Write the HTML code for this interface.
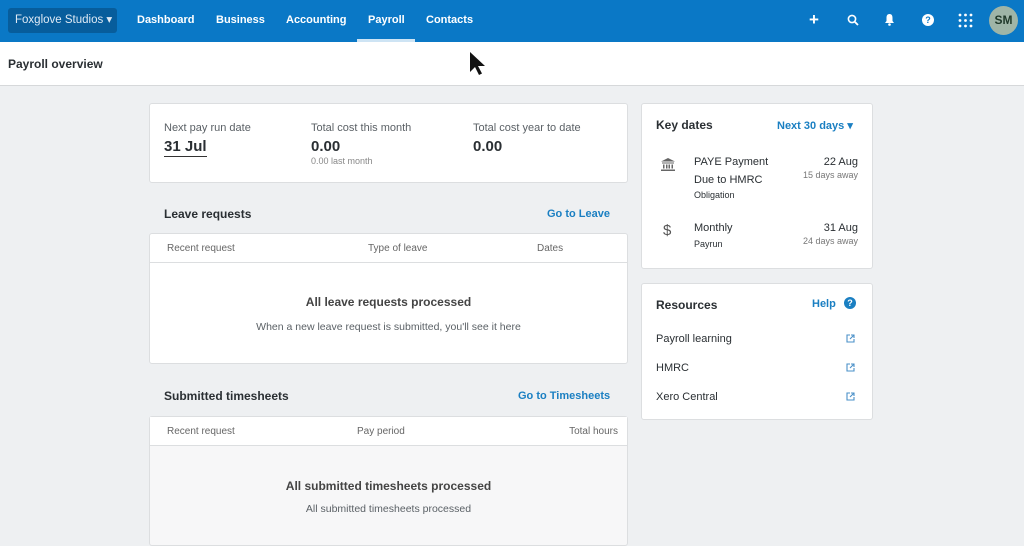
<!DOCTYPE html>
<html><head><meta charset="utf-8"><style>
*{box-sizing:border-box;margin:0;padding:0}
body{width:1024px;height:538px;overflow:hidden;font-family:"Liberation Sans",sans-serif;background:#eef0f2;position:relative;color:#2a2f33}
.nav{position:absolute;left:0;top:0;width:1024px;height:42px;background:#0a78c6}
.org{position:absolute;left:8px;top:8px;width:109px;height:25px;background:#075d9c;border-radius:3px;color:#dfeaf5;font-size:11.5px;line-height:25px;padding-left:7px}
.nl{position:absolute;top:14px;color:#fff;font-weight:bold;font-size:11px}
.ul{position:absolute;left:357px;top:39px;width:58px;height:3px;background:#fff;opacity:.8}
.hdr{position:absolute;left:0;top:42px;width:1024px;height:44px;background:#fff;border-bottom:1px solid #d6d8da}
.hdr b{position:absolute;left:8px;top:15px;font-size:12px}
.card{position:absolute;background:#fff;border:1px solid #dcdee0;border-radius:3px}
.abs{position:absolute;white-space:nowrap}
.g{color:#5b6166}
.lnk{color:#1a7fc2;font-weight:bold;font-size:11px}
.th{position:absolute;left:0;top:0;width:100%;height:29px;border-bottom:1px solid #dcdee0;font-size:10px;color:#666}
</style></head><body>
<div class="nav">
<div class="org">Foxglove Studios ▾</div>
<span class="nl" style="left:137px">Dashboard</span>
<span class="nl" style="left:216px">Business</span>
<span class="nl" style="left:286px">Accounting</span>
<span class="nl" style="left:368px">Payroll</span>
<span class="nl" style="left:426px">Contacts</span>
<div class="ul"></div>
<span class="abs" style="left:809px;top:10px;color:#fff;font-size:17px;font-weight:bold">+</span>
<svg class="abs" style="left:847px;top:14px" width="12" height="12" viewBox="0 0 12 12"><circle cx="5" cy="5" r="3.6" stroke="#fff" stroke-width="1.6" fill="none"/><path d="M7.6 7.6L11 11" stroke="#fff" stroke-width="1.8"/></svg>
<svg class="abs" style="left:884px;top:13px" width="11" height="13" viewBox="0 0 11 13"><path d="M5.5 1C3 1 2.5 3 2.5 5v3L1 10h9L8.5 8V5C8.5 3 8 1 5.5 1z" fill="#fff"/><circle cx="5.5" cy="11.5" r="1.3" fill="#fff"/></svg>
<div class="abs" style="left:922px;top:14px;width:12px;height:12px;border-radius:50%;background:#fff;color:#0a78c6;font-size:9px;font-weight:bold;text-align:center;line-height:12px">?</div>
<svg class="abs" style="left:958px;top:13px" width="15" height="15"><g fill="#fff"><circle cx="2" cy="2" r="1.4"/><circle cx="7.5" cy="2" r="1.4"/><circle cx="13" cy="2" r="1.4"/><circle cx="2" cy="7.5" r="1.4"/><circle cx="7.5" cy="7.5" r="1.4"/><circle cx="13" cy="7.5" r="1.4"/><circle cx="2" cy="13" r="1.4"/><circle cx="7.5" cy="13" r="1.4"/><circle cx="13" cy="13" r="1.4"/></g></svg>
<div class="abs" style="left:989px;top:6px;width:29px;height:29px;border-radius:50%;background:#9fb5a7;color:#213a2b;font-size:12px;font-weight:bold;text-align:center;line-height:29px">SM</div>
</div>
<div class="hdr"><b>Payroll overview</b></div>
<svg class="abs" style="left:469px;top:51px" width="18" height="26" viewBox="0 0 18 26"><path d="M1 1v20l5-5 4 8 3-1.5-4-7.5h7z" fill="#111"/></svg>

<div class="card" style="left:149px;top:103px;width:479px;height:80px">
<span class="abs g" style="left:14px;top:18px;font-size:11px">Next pay run date</span>
<span class="abs" style="left:14px;top:34px;font-size:15px;font-weight:bold;border-bottom:1px solid #333;padding-bottom:1px">31 Jul</span>
<span class="abs g" style="left:161px;top:18px;font-size:11px">Total cost this month</span>
<span class="abs" style="left:161px;top:34px;font-size:15px;font-weight:bold">0.00</span>
<span class="abs g" style="left:161px;top:52px;font-size:9px;color:#888">0.00 last month</span>
<span class="abs g" style="left:323px;top:18px;font-size:11px">Total cost year to date</span>
<span class="abs" style="left:323px;top:34px;font-size:15px;font-weight:bold">0.00</span>
</div>

<span class="abs" style="left:164px;top:207px;font-size:12px;font-weight:bold">Leave requests</span>
<span class="abs lnk" style="left:547px;top:208px">Go to Leave</span>
<div class="card" style="left:149px;top:233px;width:479px;height:131px">
<div class="th"><span class="abs" style="left:17px;top:9px">Recent request</span><span class="abs" style="left:218px;top:9px">Type of leave</span><span class="abs" style="left:387px;top:9px">Dates</span></div>
<div class="abs" style="left:0;width:477px;top:61px;text-align:center;font-size:12px;font-weight:bold;color:#444">All leave requests processed</div>
<div class="abs g" style="left:0;width:477px;top:87px;text-align:center;font-size:10.5px">When a new leave request is submitted, you'll see it here</div>
</div>

<span class="abs" style="left:164px;top:389px;font-size:12px;font-weight:bold">Submitted timesheets</span>
<span class="abs lnk" style="left:518px;top:390px">Go to Timesheets</span>
<div class="card" style="left:149px;top:416px;width:479px;height:130px;background:#f7f7f8">
<div class="th" style="background:#fff"><span class="abs" style="left:17px;top:9px">Recent request</span><span class="abs" style="left:207px;top:9px">Pay period</span><span class="abs" style="right:9px;top:9px">Total hours</span></div>
<div class="abs" style="left:0;width:477px;top:62px;text-align:center;font-size:12px;font-weight:bold;color:#444">All submitted timesheets processed</div>
<div class="abs g" style="left:0;width:477px;top:86px;text-align:center;font-size:10.5px">All submitted timesheets processed</div>
</div>

<div class="card" style="left:641px;top:103px;width:232px;height:166px">
<span class="abs" style="left:14px;top:14px;font-size:12px;font-weight:bold">Key dates</span>
<span class="abs lnk" style="left:135px;top:15px">Next 30 days ▾</span>
<svg class="abs" style="left:19px;top:54px" width="14" height="13" viewBox="0 0 14 13"><path d="M7 0L0 3.5h14z M1 4.5h12v1H1z M2 6.5h1.5v4H2z M5 6.5h1.5v4H5z M7.5 6.5H9v4H7.5z M10.5 6.5H12v4h-1.5z M0 11.5h14V13H0z" fill="#666"/></svg>
<span class="abs" style="left:52px;top:52px;font-size:11px">PAYE Payment</span>
<span class="abs" style="left:52px;top:70px;font-size:11px">Due to HMRC</span>
<span class="abs" style="left:52px;top:86px;font-size:9px">Obligation</span>
<span class="abs" style="right:14px;top:52px;font-size:11px">22 Aug</span>
<span class="abs" style="right:14px;top:66px;font-size:9px;color:#777">15 days away</span>
<span class="abs" style="left:21px;top:118px;font-size:15px;color:#555">$</span>
<span class="abs" style="left:52px;top:118px;font-size:11px">Monthly</span>
<span class="abs" style="left:52px;top:135px;font-size:9px">Payrun</span>
<span class="abs" style="right:14px;top:118px;font-size:11px">31 Aug</span>
<span class="abs" style="right:14px;top:132px;font-size:9px;color:#777">24 days away</span>
</div>

<div class="card" style="left:641px;top:283px;width:232px;height:137px">
<span class="abs" style="left:14px;top:14px;font-size:12px;font-weight:bold">Resources</span>
<span class="abs lnk" style="left:170px;top:14px">Help</span>
<div class="abs" style="left:202px;top:13px;width:12px;height:12px;border-radius:50%;background:#1a7fc2;color:#fff;font-size:9px;font-weight:bold;text-align:center;line-height:12px">?</div>
<span class="abs" style="left:14px;top:49px;font-size:11px">Payroll learning</span>
<span class="abs" style="left:14px;top:78px;font-size:11px">HMRC</span>
<span class="abs" style="left:14px;top:107px;font-size:11px">Xero Central</span>
<svg class="abs" style="left:204px;top:50px" width="9" height="9" viewBox="0 0 9 9"><path d="M4 1H1v7h7V5 M5 1h3v3 M8 1L4 5" stroke="#4a90c8" stroke-width="1.1" fill="none"/></svg>
<svg class="abs" style="left:204px;top:79px" width="9" height="9" viewBox="0 0 9 9"><path d="M4 1H1v7h7V5 M5 1h3v3 M8 1L4 5" stroke="#4a90c8" stroke-width="1.1" fill="none"/></svg>
<svg class="abs" style="left:204px;top:108px" width="9" height="9" viewBox="0 0 9 9"><path d="M4 1H1v7h7V5 M5 1h3v3 M8 1L4 5" stroke="#4a90c8" stroke-width="1.1" fill="none"/></svg>
</div>
</body></html>
